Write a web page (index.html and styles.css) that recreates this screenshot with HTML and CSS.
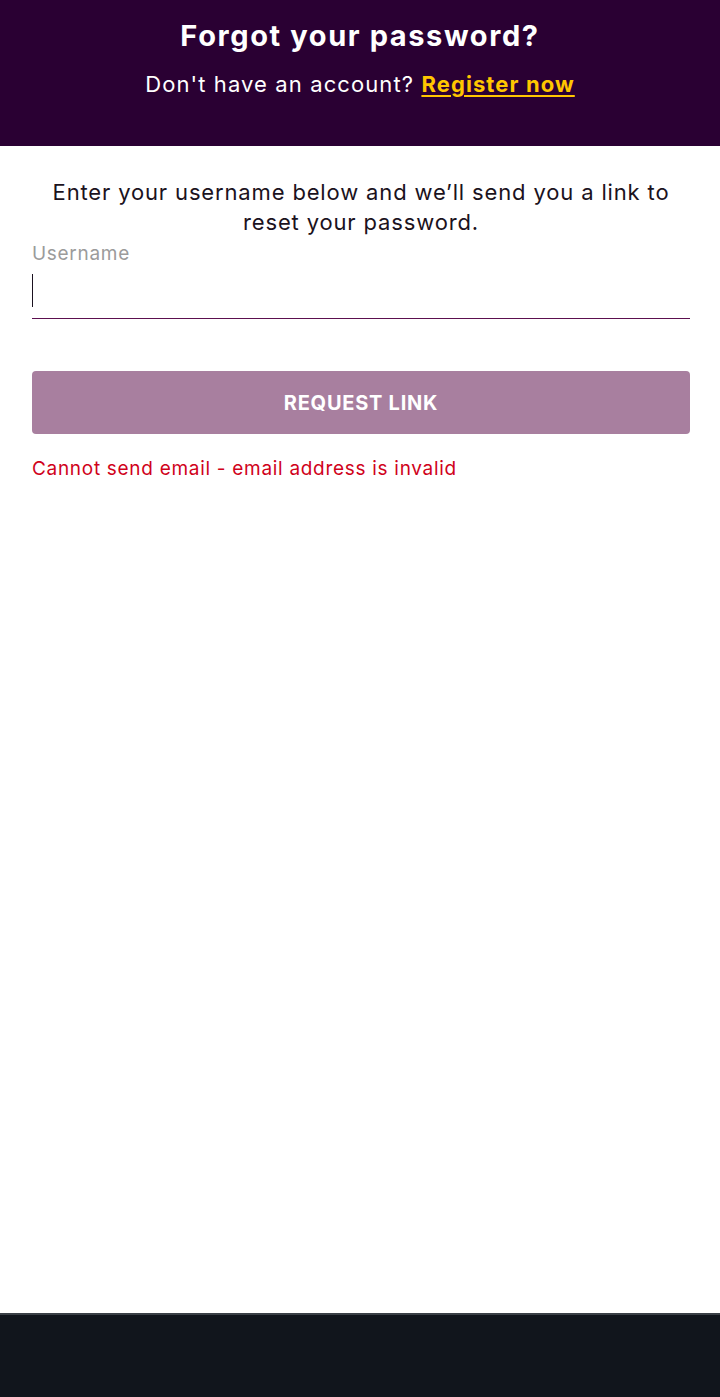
FILE: index.html
```html
<!DOCTYPE html>
<html lang="en">
<head>
<meta charset="utf-8">
<title>Forgot your password?</title>
<link rel="stylesheet" href="styles.css">
</head>
<body>
<div class="page">
  <header class="hero">
    <h1 class="hero-title">Forgot your password?</h1>
    <p class="hero-sub">Don't have an account? <a class="hero-link" href="#">Register now</a></p>
  </header>
  <main class="content">
    <p class="intro">Enter your username below and we’ll send you a link to reset your password.</p>
    <form class="form">
      <label class="field-label" for="username">Username</label>
      <div class="field">
        <input class="field-input" id="username" type="text" autofocus>
        <span class="caret"></span>
      </div>
      <button class="submit" type="button">REQUEST LINK</button>
      <p class="error">Cannot send email - email address is invalid</p>
    </form>
  </main>
  <footer class="footer"></footer>
</div>
</body>
</html>
```

FILE: styles.css
```css
* { box-sizing: border-box; }
html, body { margin: 0; padding: 0; }
body {
  font-family: Inter, "Open Sans", "Liberation Sans", sans-serif;
  background: #ffffff;
  color: #1b1220;
}
.page {
  min-height: 1397px;
  display: flex;
  flex-direction: column;
}
.hero {
  background: #2a0033;
  height: 146px;
  padding-top: 18px;
  text-align: center;
  color: #ffffff;
}
.hero-title {
  margin: 0;
  font-size: 29px;
  line-height: 36px;
  font-weight: 700;
  letter-spacing: 1.6px;
}
.hero-sub {
  margin: 15px 0 0;
  font-size: 22px;
  line-height: 30px;
  letter-spacing: 1.1px;
}
.hero-link {
  color: #ffc600;
  font-weight: 700;
  text-decoration: underline;
  text-underline-offset: 3px;
  text-decoration-thickness: 2px;
}
.content {
  flex: 1;
  padding: 31px 30px 0 32px;
}
.intro {
  margin: 0 10px;
  text-align: center;
  font-size: 22px;
  line-height: 30px;
  letter-spacing: 0.85px;
  color: #1b1220;
}
.form {
  display: flex;
  flex-direction: column;
}
.field-label {
  margin-top: 5px;
  font-size: 19px;
  line-height: 24px;
  letter-spacing: 0.7px;
  color: #9b9b9b;
}
.field {
  position: relative;
  height: 53px;
  border-bottom: 1px solid #5c0f4f;
}
.field-input {
  width: 100%;
  height: 100%;
  border: 0;
  outline: none;
  background: transparent;
  font: inherit;
  font-size: 22px;
  padding: 0;
  caret-color: transparent;
}
.caret {
  position: absolute;
  left: 0;
  top: 8px;
  width: 1px;
  height: 33px;
  background: #1b1220;
}
.submit {
  margin-top: 52px;
  height: 63px;
  border: 0;
  border-radius: 4px;
  background: #a87f9f;
  color: #ffffff;
  font-family: inherit;
  font-size: 20px;
  font-weight: 700;
  letter-spacing: 0.75px;
}
.error {
  margin: 23px 0 0;
  font-size: 19px;
  line-height: 24px;
  letter-spacing: 0.7px;
  color: #d0021b;
}
.footer {
  height: 84px;
  background: #11151c;
  border-top: 2px solid #3b4046;
}
```
